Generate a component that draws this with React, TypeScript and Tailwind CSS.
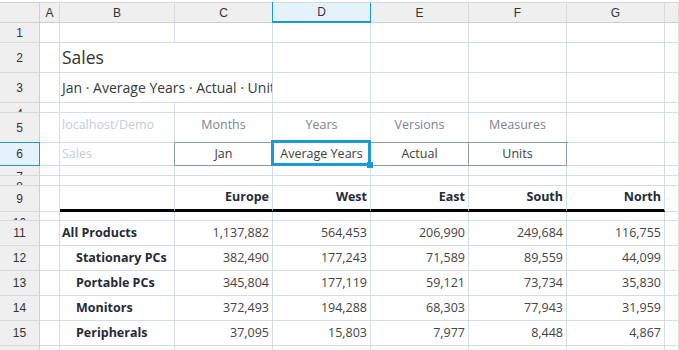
import React from 'react'
import clsx from 'clsx'

const letters = ['A', 'B', 'C', 'D', 'E', 'F', 'G', '']

const regions = ['Europe', 'West', 'East', 'South', 'North']

const products = [
  { name: 'All Products', top: true, values: ['1,137,882', '564,453', '206,990', '249,684', '116,755'] },
  { name: 'Stationary PCs', top: false, values: ['382,490', '177,243', '71,589', '89,559', '44,099'] },
  { name: 'Portable PCs', top: false, values: ['345,804', '177,119', '59,121', '73,734', '35,830'] },
  { name: 'Monitors', top: false, values: ['372,493', '194,288', '68,303', '77,943', '31,959'] },
  { name: 'Peripherals', top: false, values: ['37,095', '15,803', '7,977', '8,448', '4,867'] },
]

const dims = ['Months', 'Years', 'Versions', 'Measures']
const picks = ['Jan', 'Average Years', 'Actual', 'Units']

function RowHead({ n, short, active }: { n: number | string; short?: boolean; active?: boolean }) {
  return (
    <div
      className={clsx(
        'flex justify-center overflow-hidden border-r border-b font-["Liberation_Sans",Arial,sans-serif] text-[12px] text-[#333]',
        short ? 'items-start pt-[2px] leading-[18px]' : 'items-center',
        active
          ? 'bg-[#e4f3fb] border-r-[#1a9bd7] border-b-[#1a9bd7] shadow-[0_-1px_0_#1a9bd7]'
          : 'bg-[#efefef] border-r-[#cfcfcf] border-b-[#d9d9d9]'
      )}
    >
      {n}
    </div>
  )
}

function Cell({ children, className }: { children?: React.ReactNode; className?: string }) {
  return (
    <div
      className={clsx(
        'relative flex items-center overflow-hidden whitespace-nowrap border-r border-b border-[#d5dde7] bg-white',
        className
      )}
    >
      {children}
    </div>
  )
}

function Empty({ count }: { count: number }) {
  return (
    <>
      {Array.from({ length: count }).map((_, i) => (
        <Cell key={i} />
      ))}
    </>
  )
}

export default function App() {
  return (
    <div className="h-[350px] w-full overflow-hidden bg-white pt-[2px] font-['Open_Sans','Noto_Sans',sans-serif]">
      <div className="grid grid-cols-[40px_20px_115px_98px_98px_98px_98px_98px_1fr] grid-rows-[21px_20px_30px_30px_10px_30px_23px_10px_10px_26px_9px_25px_25px_25px_25px_25px_25px]">
        {/* column headers */}
        <div className="border-t border-r border-b border-[#cfcfcf] bg-[#efefef]" />
        {letters.map((l) => (
          <div
            key={l || 'h'}
            className={clsx(
              'flex items-center justify-center border-t border-r font-["Liberation_Sans",Arial,sans-serif] text-[12px] text-[#333]',
              l === 'D'
                ? 'bg-[#e4f3fb] border-t-[#d9d9d9] border-r-[#1a9bd7] border-b-2 border-b-[#1a9bd7] shadow-[-1px_0_0_#1a9bd7]'
                : 'bg-[#efefef] border-[#d9d9d9] border-b border-b-[#cfcfcf]'
            )}
          >
            {l}
          </div>
        ))}

        {/* 1 */}
        <RowHead n={1} />
        <Empty count={8} />

        {/* 2 */}
        <RowHead n={2} />
        <Cell />
        <Cell className="col-span-2 pl-[2px] text-[17.5px] text-[#333]">Sales</Cell>
        <Empty count={5} />

        {/* 3 */}
        <RowHead n={3} />
        <Cell />
        <Cell className="col-span-2 pl-[2px] text-[14px] text-[#3a3a3a]">
          Jan · Average Years · Actual · Units
        </Cell>
        <Empty count={5} />

        {/* 4 */}
        <RowHead n={4} short />
        <Empty count={8} />

        {/* 5 */}
        <RowHead n={5} />
        <Cell />
        <Cell className="pb-[5px] pl-[2px] text-[12.5px] text-[#c3ccd7]">localhost/Demo</Cell>
        {dims.map((d) => (
          <Cell key={d} className="justify-center pb-[5px] text-[12.5px] text-[#7b858f]">
            {d}
          </Cell>
        ))}
        <Empty count={2} />

        {/* 6 */}
        <RowHead n={6} active />
        <Cell />
        <Cell className="pl-[2px] text-[12.5px] text-[#c3ccd7]">Sales</Cell>
        {picks.map((p) =>
          p === 'Average Years' ? (
            <Cell key={p} className="justify-center text-[12.5px] text-[#3d3d3d] overflow-visible">
              {p}
              <div className="absolute -left-[2px] -top-[3px] -right-[1px] -bottom-[1px] z-10 border-[3px] border-[#1a9bd7]" />
              <div className="absolute -right-[3px] -bottom-[3px] z-20 h-[6px] w-[6px] bg-[#1a9bd7]" />
            </Cell>
          ) : (
            <Cell
              key={p}
              className="justify-center text-[12.5px] text-[#3d3d3d] border-r-[#8e9ba6] border-b-[#8e9ba6] shadow-[0_0_0_1px_#8e9ba6]"
            >
              {p}
            </Cell>
          )
        )}
        <Empty count={2} />

        {/* 7, 8 */}
        <RowHead n={7} short />
        <Empty count={8} />
        <RowHead n={8} short />
        <Empty count={8} />

        {/* 9 */}
        <RowHead n={9} />
        <Cell />
        <Cell className="border-b-[3px] border-b-black" />
        {regions.map((r) => (
          <Cell
            key={r}
            className="justify-end pr-[3px] text-[12.5px] font-bold text-[#262a36] border-b-[3px] border-b-black"
          >
            {r}
          </Cell>
        ))}
        <Cell />

        {/* 10 */}
        <RowHead n={10} short />
        <Empty count={8} />

        {/* data */}
        {products.map((p, i) => (
          <React.Fragment key={p.name}>
            <RowHead n={11 + i} />
            <Cell />
            <Cell
              className={clsx(
                'text-[12.5px] font-bold text-[#262a36]',
                p.top ? 'pl-[2px]' : 'pl-[16px]'
              )}
            >
              {p.name}
            </Cell>
            {p.values.map((v, j) => (
              <Cell key={j} className="justify-end pr-[3px] text-[12.5px] text-[#444]">
                {v}
              </Cell>
            ))}
            <Cell />
          </React.Fragment>
        ))}

        {/* 16 */}
        <RowHead n={16} />
        <Empty count={8} />
      </div>
    </div>
  )
}
